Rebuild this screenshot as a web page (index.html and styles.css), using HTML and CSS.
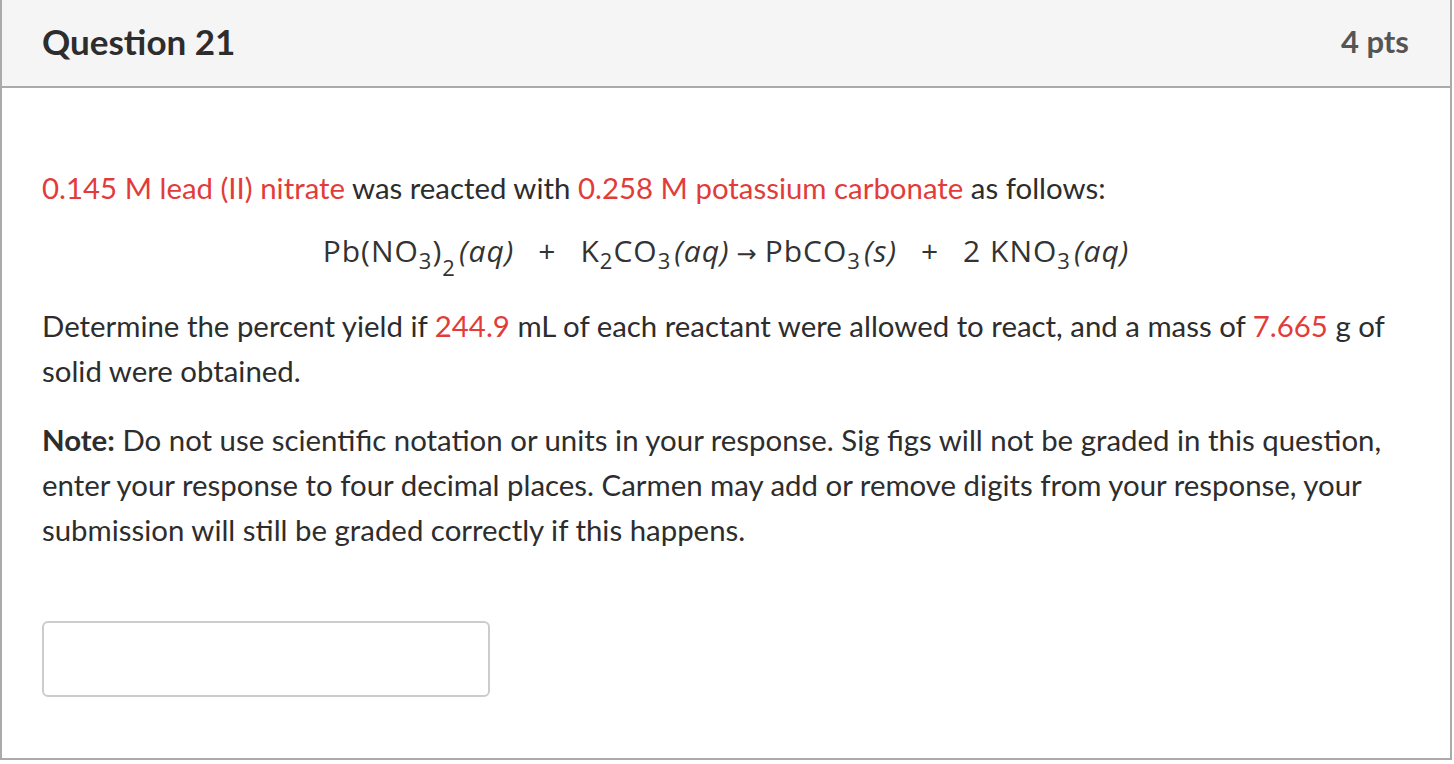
FILE: index.html
```html
<!DOCTYPE html>
<html>
<head>
<meta charset="utf-8">
<link rel="stylesheet" href="styles.css">
</head>
<body>
<div class="question">
  <div class="q-header">
    <h2 class="q-title">Question 21</h2>
    <span class="q-points">4 pts</span>
  </div>
  <div class="q-body">
    <p class="p-first"><span class="red">0.145 M lead (II) nitrate</span> was reacted with <span class="red">0.258 M potassium carbonate</span> as follows:</p>
    <div class="equation"><span class="term">Pb(NO<sub>3</sub>)<sub class="sub2">2</sub><i>(aq)</i></span><span class="op">+</span><span class="term">K<sub>2</sub>CO<sub>3</sub><i>(aq)</i></span><span class="arrow">&rarr;</span><span class="term">PbCO<sub>3</sub><i>(s)</i></span><span class="op">+</span><span class="term">2 KNO<sub>3</sub><i>(aq)</i></span></div>
    <p>Determine the percent yield if <span class="red">244.9</span> mL of each reactant were allowed to react, and a mass of <span class="red">7.665</span> g of solid were obtained.</p>
    <p class="note"><strong>Note:</strong> Do not use scientific notation or units in your response. Sig figs will not be graded in this question, enter your response to four decimal places. Carmen may add or remove digits from your response, your submission will still be graded correctly if this happens.</p>
    <div class="answer"><input class="answer-input" type="text"></div>
  </div>
</div>
</body>
</html>
```
FILE: styles.css
```css
html, body {
  margin: 0;
  padding: 0;
  background: #ffffff;
}
.question {
  width: 1448px;
  height: 758px;
  border: 2px solid #aaaaaa;
  border-top: none;
  font-family: Lato, "Open Sans", sans-serif;
  color: #2d2d2d;
}
.q-header {
  box-sizing: border-box;
  height: 88px;
  background: #f5f5f5;
  border-bottom: 2px solid #aaaaaa;
  display: flex;
  align-items: center;
  justify-content: space-between;
  padding: 0 41px 5px 40px;
}
.q-title {
  margin: 0;
  font-size: 35px;
  font-weight: 700;
  color: #2d2d2d;
}
.q-points {
  font-size: 31px;
  font-weight: 700;
  color: #555555;
}
.q-body {
  padding: 77px 28px 0 40px;
  font-size: 29.4px;
  line-height: 45px;
}
.q-body p {
  margin: 0;
}
.red {
  color: #e23c3a;
}
.equation {
  display: flex;
  justify-content: center;
  align-items: baseline;
  font-family: "Open Sans", "DejaVu Sans", sans-serif;
  font-size: 30px;
  line-height: 60px;
  height: 60px;
  margin: 11px 12px 22px 0;
  color: #333333;
  letter-spacing: 1px;
}
.term {
  white-space: nowrap;
}
.op {
  margin: 0 24px;
}
.equation sub {
  font-size: 22px;
  line-height: 0;
  vertical-align: -7px;
}
.equation sub.sub2 {
  vertical-align: -14px;
}
.equation i {
  font-style: italic;
  margin-left: 3px;
}
.arrow {
  font-size: 24px;
  margin: 0 7px;
}
.note {
  margin-top: 24px !important;
}
.answer {
  margin-top: 69px;
}
.answer-input {
  display: block;
  box-sizing: border-box;
  width: 448px;
  height: 76px;
  border: 2px solid #cccccc;
  border-radius: 6px;
  margin: 0;
  background: #ffffff;
}
```
